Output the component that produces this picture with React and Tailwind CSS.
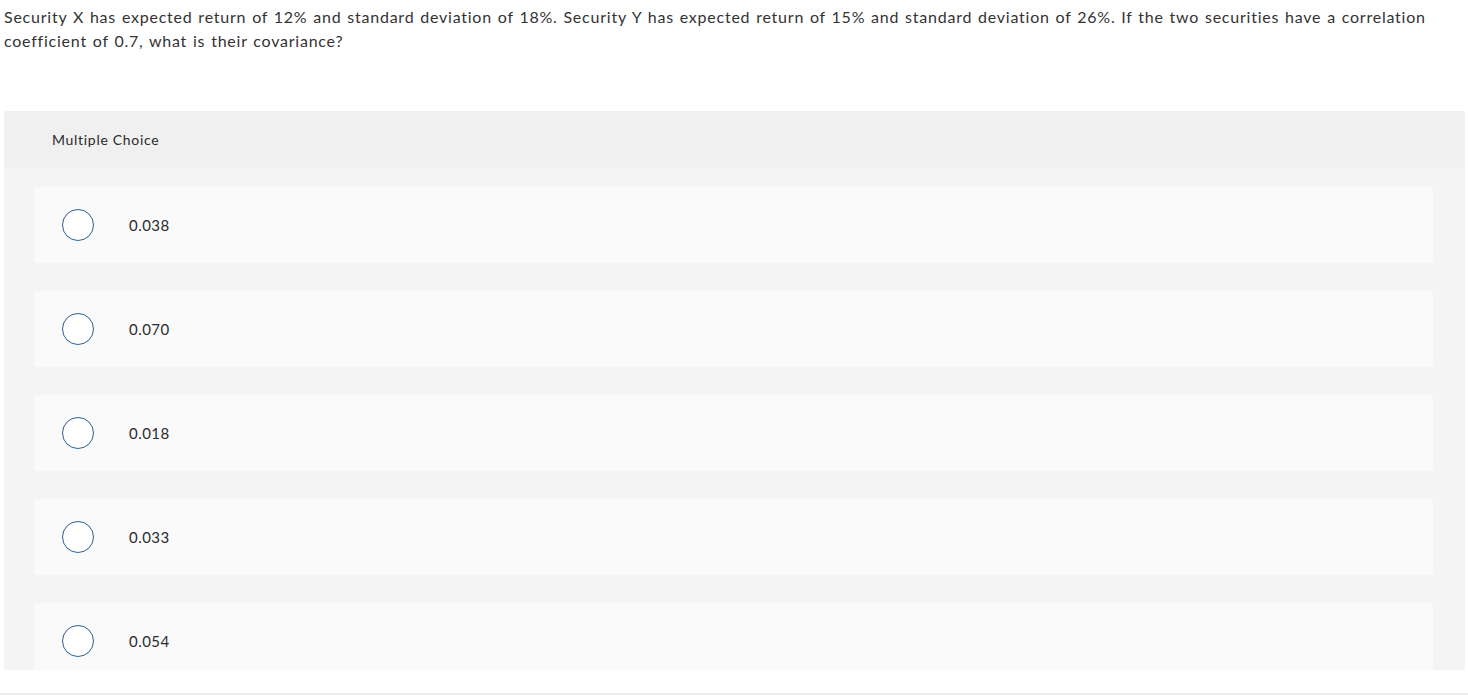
import React from "react";

const options = ["0.038", "0.070", "0.018", "0.033", "0.054"];

function Option({ label }) {
  return (
    <div className="flex h-[76px] shrink-0 items-center rounded-[3px] bg-[#fafafa] pl-[28px]">
      <span className="h-8 w-8 rounded-full border-[1.5px] border-[#2d5f95] bg-white" />
      <span className="ml-[35px] text-[15px] tracking-[0.03em] text-[#2b2b2b]">{label}</span>
    </div>
  );
}

export default function App() {
  return (
    <div className="h-[697px] overflow-hidden bg-white font-['Lato','Liberation_Sans',sans-serif]">
      {/* question */}
      <p className="px-1 pt-[5px] text-[16px] leading-6 tracking-[0.048em] [word-spacing:1px] text-[#333]">
        Security X has expected return of 12% and standard deviation of 18%. Security Y has expected return of 15% and
        standard deviation of 26%. If the two securities have a correlation coefficient of 0.7, what is their covariance?
      </p>

      {/* answer panel */}
      <div className="mt-[58px] ml-1 mr-[3px] h-[559px] overflow-hidden rounded-t-[3px] bg-[#f4f4f4]">
        <div className="flex h-[57px] items-center bg-[#f0f0f0] pl-12 text-[14px] tracking-[0.05em] text-[#2b2b2b]">
          Multiple Choice
        </div>
        <div className="flex flex-col gap-[28px] pl-[30px] pr-[32px] pt-[19px]">
          {options.map((o) => (
            <Option key={o} label={o} />
          ))}
        </div>
      </div>

      <div className="mt-[23px] h-[2px] bg-[#ededed]" />
    </div>
  );
}
